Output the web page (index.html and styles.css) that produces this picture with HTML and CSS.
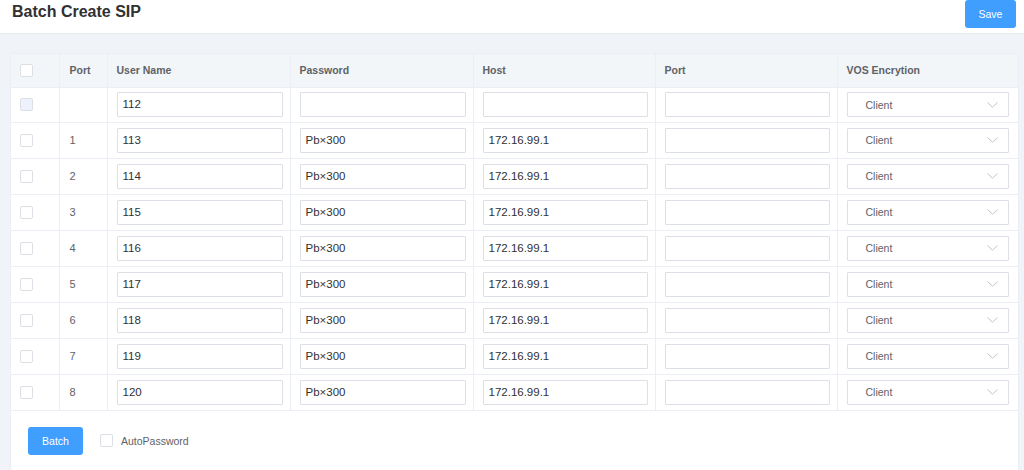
FILE: index.html
```html
<!DOCTYPE html>
<html>
<head>
<meta charset="utf-8">
<link rel="stylesheet" href="styles.css">
</head>
<body>
<header class="topbar">
  <h1 class="title">Batch Create SIP</h1>
  <button class="btn btn-primary btn-save">Save</button>
</header>
<main class="page">
  <section class="card">
    <table class="grid">
      <colgroup>
        <col class="c-check"><col class="c-port"><col class="c-wide"><col class="c-wide"><col class="c-mid"><col class="c-mid"><col class="c-last">
      </colgroup>
      <thead>
        <tr>
          <th><span class="cb"></span></th>
          <th class="num">Port</th>
          <th>User Name</th>
          <th>Password</th>
          <th>Host</th>
          <th>Port</th>
          <th>VOS Encrytion</th>
        </tr>
      </thead>
      <tbody>
        <tr class="first">
          <td><span class="cb cb-disabled"></span></td>
          <td class="num"></td>
          <td><div class="input">112</div></td>
          <td><div class="input"></div></td>
          <td><div class="input"></div></td>
          <td><div class="input"></div></td>
          <td><div class="select"><span>Client</span><svg class="chev" width="11" height="6" viewBox="0 0 11 6"><path d="M0.5 0.5 L5.5 5.2 L10.5 0.5" fill="none" stroke="#c0c4cc" stroke-width="1"/></svg></div></td>
        </tr>
        <tr>
          <td><span class="cb"></span></td><td class="num">1</td>
          <td><div class="input">113</div></td><td><div class="input">Pb×300</div></td><td><div class="input">172.16.99.1</div></td><td><div class="input"></div></td>
          <td><div class="select"><span>Client</span><svg class="chev" width="11" height="6" viewBox="0 0 11 6"><path d="M0.5 0.5 L5.5 5.2 L10.5 0.5" fill="none" stroke="#c0c4cc" stroke-width="1"/></svg></div></td>
        </tr>
        <tr>
          <td><span class="cb"></span></td><td class="num">2</td>
          <td><div class="input">114</div></td><td><div class="input">Pb×300</div></td><td><div class="input">172.16.99.1</div></td><td><div class="input"></div></td>
          <td><div class="select"><span>Client</span><svg class="chev" width="11" height="6" viewBox="0 0 11 6"><path d="M0.5 0.5 L5.5 5.2 L10.5 0.5" fill="none" stroke="#c0c4cc" stroke-width="1"/></svg></div></td>
        </tr>
        <tr>
          <td><span class="cb"></span></td><td class="num">3</td>
          <td><div class="input">115</div></td><td><div class="input">Pb×300</div></td><td><div class="input">172.16.99.1</div></td><td><div class="input"></div></td>
          <td><div class="select"><span>Client</span><svg class="chev" width="11" height="6" viewBox="0 0 11 6"><path d="M0.5 0.5 L5.5 5.2 L10.5 0.5" fill="none" stroke="#c0c4cc" stroke-width="1"/></svg></div></td>
        </tr>
        <tr>
          <td><span class="cb"></span></td><td class="num">4</td>
          <td><div class="input">116</div></td><td><div class="input">Pb×300</div></td><td><div class="input">172.16.99.1</div></td><td><div class="input"></div></td>
          <td><div class="select"><span>Client</span><svg class="chev" width="11" height="6" viewBox="0 0 11 6"><path d="M0.5 0.5 L5.5 5.2 L10.5 0.5" fill="none" stroke="#c0c4cc" stroke-width="1"/></svg></div></td>
        </tr>
        <tr>
          <td><span class="cb"></span></td><td class="num">5</td>
          <td><div class="input">117</div></td><td><div class="input">Pb×300</div></td><td><div class="input">172.16.99.1</div></td><td><div class="input"></div></td>
          <td><div class="select"><span>Client</span><svg class="chev" width="11" height="6" viewBox="0 0 11 6"><path d="M0.5 0.5 L5.5 5.2 L10.5 0.5" fill="none" stroke="#c0c4cc" stroke-width="1"/></svg></div></td>
        </tr>
        <tr>
          <td><span class="cb"></span></td><td class="num">6</td>
          <td><div class="input">118</div></td><td><div class="input">Pb×300</div></td><td><div class="input">172.16.99.1</div></td><td><div class="input"></div></td>
          <td><div class="select"><span>Client</span><svg class="chev" width="11" height="6" viewBox="0 0 11 6"><path d="M0.5 0.5 L5.5 5.2 L10.5 0.5" fill="none" stroke="#c0c4cc" stroke-width="1"/></svg></div></td>
        </tr>
        <tr>
          <td><span class="cb"></span></td><td class="num">7</td>
          <td><div class="input">119</div></td><td><div class="input">Pb×300</div></td><td><div class="input">172.16.99.1</div></td><td><div class="input"></div></td>
          <td><div class="select"><span>Client</span><svg class="chev" width="11" height="6" viewBox="0 0 11 6"><path d="M0.5 0.5 L5.5 5.2 L10.5 0.5" fill="none" stroke="#c0c4cc" stroke-width="1"/></svg></div></td>
        </tr>
        <tr>
          <td><span class="cb"></span></td><td class="num">8</td>
          <td><div class="input">120</div></td><td><div class="input">Pb×300</div></td><td><div class="input">172.16.99.1</div></td><td><div class="input"></div></td>
          <td><div class="select"><span>Client</span><svg class="chev" width="11" height="6" viewBox="0 0 11 6"><path d="M0.5 0.5 L5.5 5.2 L10.5 0.5" fill="none" stroke="#c0c4cc" stroke-width="1"/></svg></div></td>
        </tr>
      </tbody>
    </table>
    <div class="footer">
      <button class="btn btn-primary btn-batch">Batch</button>
      <label class="check-label"><span class="cb"></span><span>AutoPassword</span></label>
    </div>
  </section>
</main>
</body>
</html>
```

FILE: styles.css
```css
* { box-sizing: border-box; }
html, body { margin: 0; padding: 0; }
body {
  font-family: "Liberation Sans", Arial, sans-serif;
  background: #f0f3f7;
  color: #606266;
  height: 470px;
  overflow: hidden;
}
.topbar {
  height: 34px;
  background: #fff;
  border-bottom: 1px solid #e6e9ee;
  display: flex;
  justify-content: space-between;
  align-items: flex-start;
  padding: 0 8px 0 12px;
}
.title {
  margin: 0;
  font-size: 16px;
  font-weight: bold;
  color: #303133;
  line-height: 24px;
}
.btn {
  font-family: "Liberation Sans", Arial, sans-serif;
  border: none;
  border-radius: 3px;
  color: #fff;
  font-size: 10.5px;
  cursor: pointer;
  padding: 0;
}
.btn-primary { background: #409eff; }
.btn-save { width: 51px; height: 28px; }
.page {
  padding: 19px 5px 0 10px;
}
.card {
  background: #fff;
  border: 1px solid #ebeef5;
  height: 420px;
}
.grid {
  width: 100%;
  border-collapse: collapse;
  table-layout: fixed;
}
.c-check { width: 48px; }
.c-port { width: 48px; }
.c-wide { width: 183px; }
.c-mid { width: 182px; }
.grid th {
  background: #f3f6f9;
  height: 33px;
  text-align: left;
  font-size: 10.5px;
  font-weight: bold;
  color: #606266;
  padding: 0 8px 0 9px;
  border-right: 1px solid #ebeef5;
  border-bottom: 1px solid #ebeef5;
}
.grid td {
  height: 36px;
  padding: 0 7px 0 9px;
  border-right: 1px solid #ebeef5;
  border-bottom: 1px solid #ebeef5;
  font-size: 11px;
  color: #606266;
}
.grid tr.first td { height: 35px; }
.grid th:last-child, .grid td:last-child { border-right: none; padding-right: 9px; }
.grid .num { padding-left: 10px; }
.cb {
  display: inline-block;
  width: 13px;
  height: 13px;
  border: 1px solid #dcdfe6;
  border-radius: 2px;
  background: #fff;
  vertical-align: middle;
}
.cb-disabled { background: #edf2fc; }
.input {
  height: 25px;
  border: 1px solid #dcdfe6;
  border-radius: 1px;
  padding: 0 5px;
  line-height: 23px;
  font-size: 11.5px;
  color: #303133;
  background: #fff;
}
.select {
  height: 25px;
  border: 1px solid #dcdfe6;
  border-radius: 1px;
  padding: 0 10px 0 18px;
  display: flex;
  align-items: center;
  justify-content: space-between;
  font-size: 10.5px;
  color: #606266;
}
.chev { display: block; }
.footer {
  display: flex;
  align-items: center;
  padding: 16px 0 0 17px;
  gap: 17px;
}
.btn-batch { width: 55px; height: 28px; }
.check-label {
  display: flex;
  align-items: center;
  gap: 8px;
  font-size: 10.5px;
  color: #606266;
}
```
